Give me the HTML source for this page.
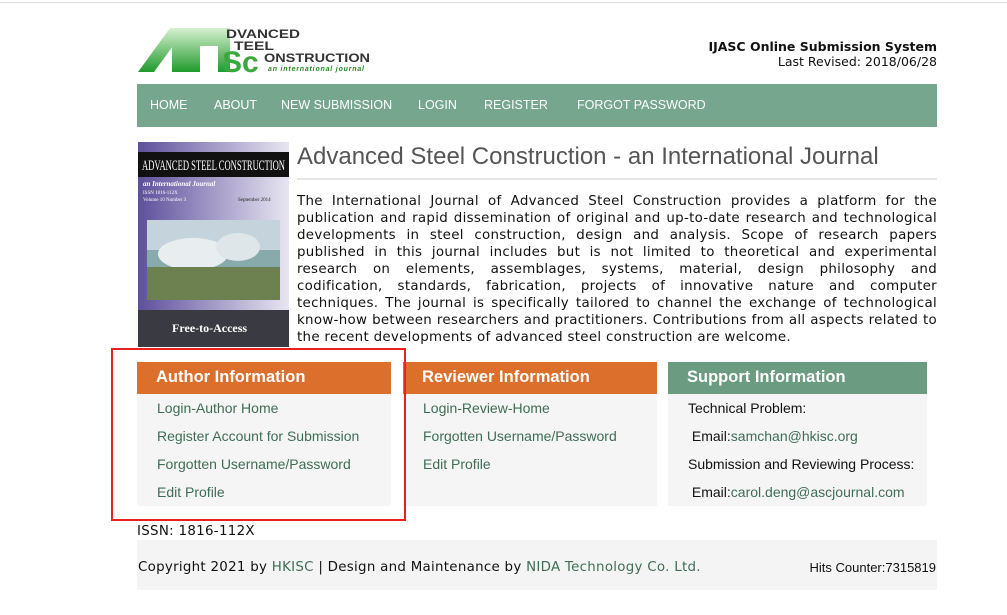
<!DOCTYPE html>
<html><head><meta charset="utf-8"><style>
*{margin:0;padding:0;box-sizing:border-box}
body{width:1007px;height:615px;background:#fff;font-family:"Liberation Sans",sans-serif;position:relative;overflow:hidden}
.topline{position:absolute;left:0;top:2px;width:1007px;height:1px;background:#ddd}
.abs{position:absolute}
.nav{left:137px;top:84px;width:800px;height:43px;background:#76a68e}
.nav span{position:absolute;top:14px;color:#fff;font-size:12.5px}
.title{left:297px;top:143px;font-size:24px;color:#555;white-space:nowrap}
.hr{left:297px;top:178px;width:640px;height:2px;background:#e6e6e6}
.para{left:297px;top:193px;width:640px;font-family:"DejaVu Sans",sans-serif;font-size:13.4px;letter-spacing:0.3px;line-height:17px;color:#111;text-align:justify}
.box{background:#f5f5f5}
.bh{height:32px;color:#fff;font-weight:bold;font-size:16.5px;padding:6px 0 0 19px}
.box a{display:block;color:#3f6d55;font-size:14px;text-decoration:none;height:28px;padding-left:20px;padding-top:2px}
.box p{font-size:14px;color:#111;height:28px;padding-left:20px;padding-top:2px}
.foot{left:137px;top:540px;width:800px;height:50px;background:#f4f4f4;font-family:"DejaVu Sans",sans-serif;font-size:13.4px;letter-spacing:0.28px;color:#111}
</style></head><body>
<div class="topline"></div>
<svg class="abs" style="left:138px;top:26px" width="235" height="48" viewBox="0 0 235 48">
<defs><linearGradient id="g" x1="0" y1="0" x2="0" y2="1"><stop offset="0" stop-color="#d8f0d0"/><stop offset="1" stop-color="#1f9a2c"/></linearGradient></defs>
<polygon points="0,46 32,2 48,2 16,46" fill="url(#g)"/>
<polygon points="34,2 48,2 48,46 34,46" fill="url(#g)"/>
<polygon points="48,2 92,2 92,46 80,46 80,20 62,20 62,46 48,46" fill="url(#g)"/>
<text x="84" y="46" font-family="Liberation Sans" font-weight="bold" font-size="30" fill="#3aa83e">Sc</text>
<text x="88" y="12" font-family="Liberation Sans" font-weight="900" font-size="12" fill="#333" textLength="74" lengthAdjust="spacingAndGlyphs">DVANCED</text>
<text x="96" y="24" font-family="Liberation Sans" font-weight="900" font-size="12" fill="#333" textLength="40" lengthAdjust="spacingAndGlyphs">TEEL</text>
<text x="126" y="36" font-family="Liberation Sans" font-weight="900" font-size="12" fill="#333" textLength="106" lengthAdjust="spacingAndGlyphs">ONSTRUCTION</text>
<text x="130" y="45" font-family="Liberation Sans" font-style="italic" font-weight="bold" font-size="7" fill="#2a8a2a" textLength="96">an international journal</text>
</svg>
<div class="abs" style="right:70px;top:39px;text-align:right;font-family:'DejaVu Sans',sans-serif;font-size:12.5px;line-height:15px;color:#111"><b>IJASC Online Submission System</b><br>Last Revised: 2018/06/28</div>
<div class="abs nav">
<span style="left:13px">HOME</span><span style="left:77px">ABOUT</span><span style="left:144px">NEW SUBMISSION</span><span style="left:281px">LOGIN</span><span style="left:347px">REGISTER</span><span style="left:440px">FORGOT PASSWORD</span></div>
<svg class="abs" style="left:138px;top:142px" width="151" height="205">
<defs><linearGradient id="c" x1="0" x2="1"><stop offset="0" stop-color="#5e4f9c"/><stop offset="1" stop-color="#e8e6f2"/></linearGradient></defs>
<rect width="151" height="205" fill="url(#c)"/>
<rect y="10" width="151" height="25" fill="#111"/>
<text x="4" y="28" font-family="Liberation Serif" font-size="15" fill="#fff" textLength="143" lengthAdjust="spacingAndGlyphs">ADVANCED STEEL CONSTRUCTION</text>
<text x="5" y="44" font-family="Liberation Serif" font-style="italic" font-weight="bold" font-size="7" fill="#fff">an International Journal</text>
<text x="5" y="52" font-family="Liberation Serif" font-size="5" fill="#fff">ISSN 1816-112X</text>
<text x="5" y="59" font-family="Liberation Serif" font-size="5" fill="#fff">Volume 10 Number 3</text>
<text x="100" y="59" font-family="Liberation Serif" font-size="5" fill="#222">September 2014</text>
<rect x="9" y="78" width="133" height="80" fill="#8aa"/>
<rect x="9" y="78" width="133" height="30" fill="#c5d4dc"/>
<ellipse cx="55" cy="112" rx="35" ry="16" fill="#e8eef0"/>
<ellipse cx="100" cy="105" rx="22" ry="14" fill="#dfe6ea"/>
<rect x="9" y="125" width="133" height="33" fill="#6c8050"/>
<rect y="168" width="151" height="37" fill="#3a3a42"/>
<text x="34" y="190" font-family="Liberation Serif" font-weight="bold" font-size="12" fill="#fff">Free-to-Access</text>
</svg>
<div class="abs title">Advanced Steel Construction - an International Journal</div>
<div class="abs hr"></div>
<div class="abs para">The International Journal of Advanced Steel Construction provides a platform for the publication and rapid dissemination of original and up-to-date research and technological developments in steel construction, design and analysis. Scope of research papers published in this journal includes but is not limited to theoretical and experimental research on elements, assemblages, systems, material, design philosophy and codification, standards, fabrication, projects of innovative nature and computer techniques. The journal is specifically tailored to channel the exchange of technological know-how between researchers and practitioners. Contributions from all aspects related to the recent developments of advanced steel construction are welcome.</div>
<div class="abs box" style="left:137px;top:362px;width:254px;height:144px"><div class="bh" style="background:#dc6f2c">Author Information</div><div style="height:4px"></div><a>Login-Author Home</a><a>Register Account for Submission</a><a>Forgotten Username/Password</a><a>Edit Profile</a></div>
<div class="abs box" style="left:403px;top:362px;width:254px;height:144px"><div class="bh" style="background:#dc6f2c">Reviewer Information</div><div style="height:4px"></div><a>Login-Review-Home</a><a>Forgotten Username/Password</a><a>Edit Profile</a></div>
<div class="abs box" style="left:668px;top:362px;width:259px;height:144px"><div class="bh" style="background:#6b9b80">Support Information</div><div style="height:4px"></div><p>Technical Problem:</p><p>&nbsp;Email:<span style="color:#3f6d55">samchan@hkisc.org</span></p><p>Submission and Reviewing Process:</p><p>&nbsp;Email:<span style="color:#3f6d55">carol.deng@ascjournal.com</span></p></div>
<div class="abs" style="left:111px;top:348px;width:295px;height:173px;border:2px solid #e8211e"></div>
<div class="abs" style="left:137px;top:524px;font-family:'DejaVu Sans',sans-serif;font-size:13.4px;letter-spacing:0.3px;color:#111">ISSN: 1816-112X</div>
<div class="abs foot"><span class="abs" style="left:1px;top:20px">Copyright 2021 by <span style="color:#3f6d55">HKISC</span> | Design and Maintenance by <span style="color:#3f6d55">NIDA Technology Co. Ltd.</span></span><span class="abs" style="right:1px;top:20px;font-family:'Liberation Sans';letter-spacing:0;font-size:13px">Hits Counter:7315819</span></div>
</body></html>
